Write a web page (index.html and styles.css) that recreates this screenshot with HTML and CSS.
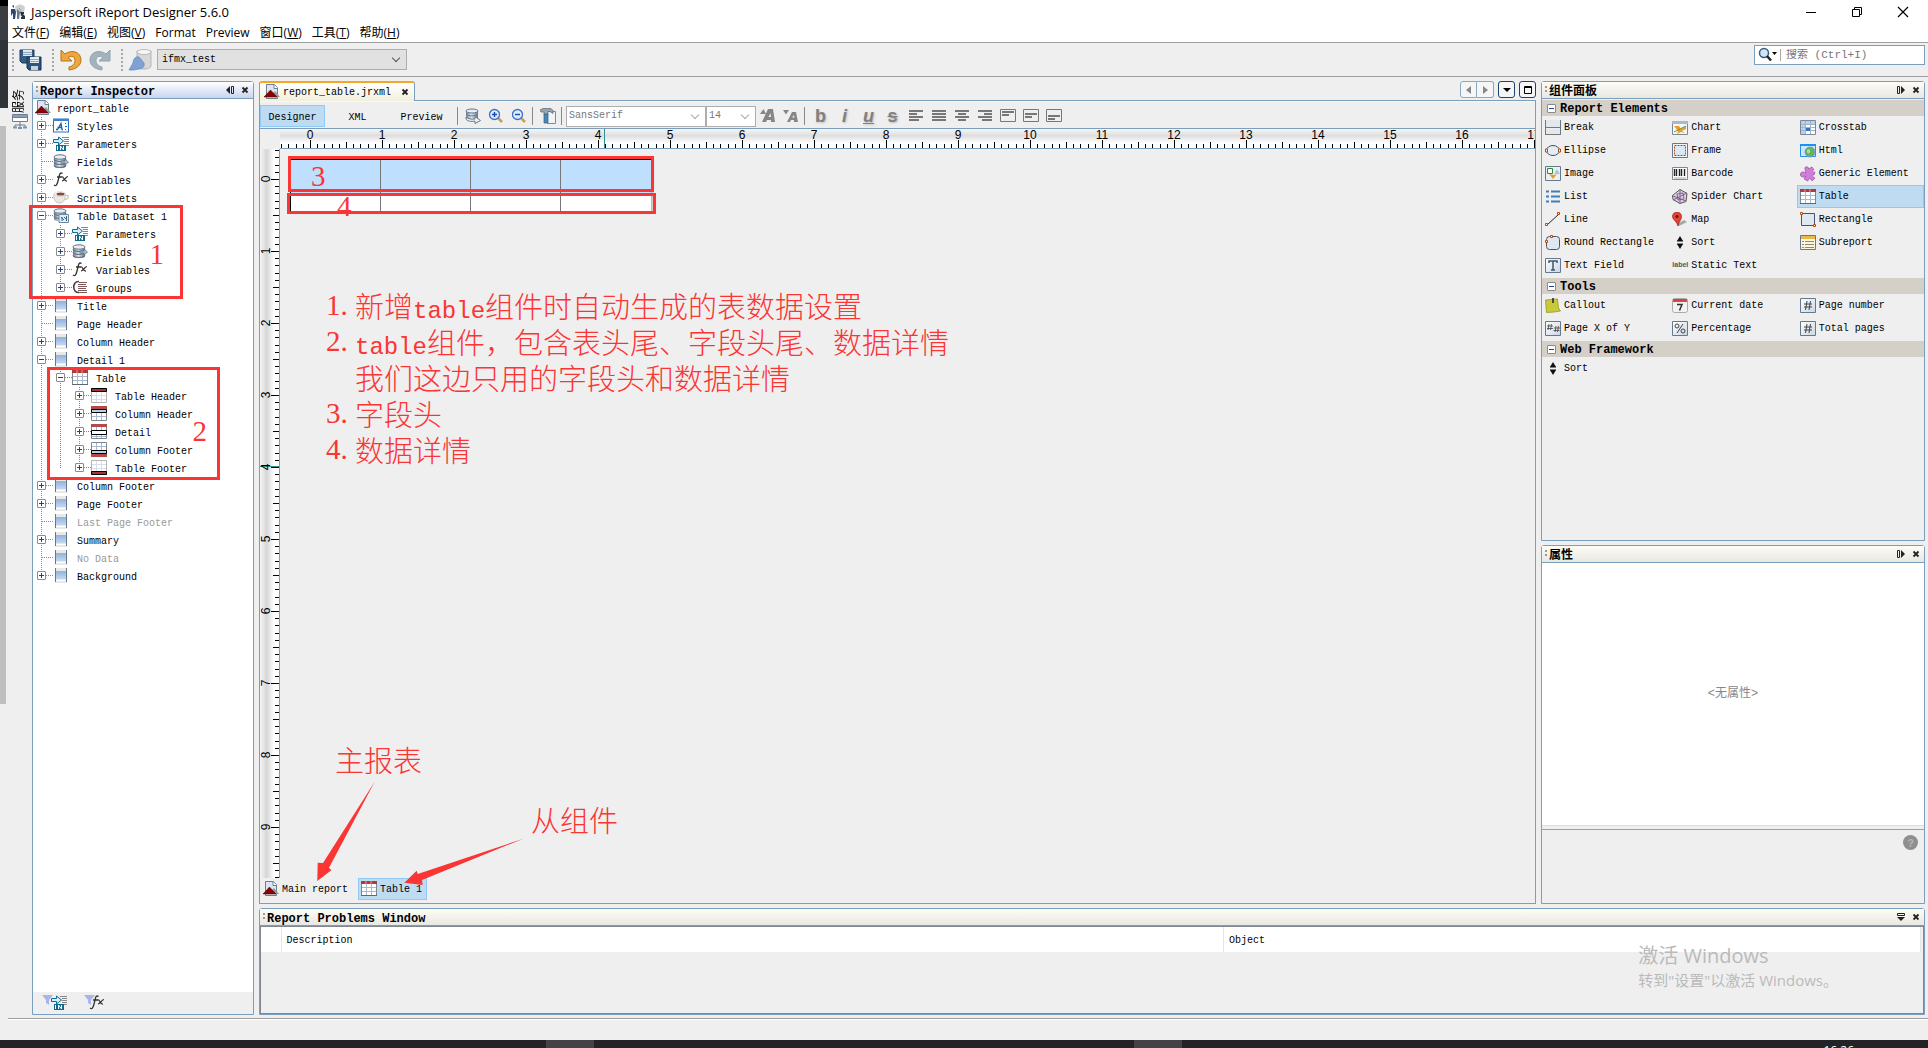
FILE: index.html
```html
<!DOCTYPE html>
<html lang="zh-CN">
<head>
    <meta charset="UTF-8">
    <meta name="viewport" content="width=device-width, initial-scale=1.0">
    <title>Jaspersoft iReport Designer 5.6.0</title>
    <link rel="stylesheet" href="styles.css">
</head>
<body>
    <!-- Icon sprite -->
    <svg class="sprite" width="0" height="0" aria-hidden="true">
        <defs>
            <linearGradient id="gBand" x1="0" y1="0" x2="0" y2="1"><stop offset="0" stop-color="#8fb2dc"/><stop offset="1" stop-color="#c3d8f0"/></linearGradient>
            <linearGradient id="gFrame" x1="0" y1="0" x2="1" y2="1"><stop offset="0" stop-color="#fff"/><stop offset="1" stop-color="#c9d6e6"/></linearGradient>
            <linearGradient id="gDb" x1="0" y1="0" x2="1" y2="0"><stop offset="0" stop-color="#6f8194"/><stop offset=".45" stop-color="#dfe7ee"/><stop offset="1" stop-color="#64778a"/></linearGradient>
        </defs>
        <symbol id="i-report" viewBox="0 0 16 16">
            <path d="M2.500 .5h8l3 3v11h-11z" fill="#dce6f2" stroke="#6d7f92"/><path d="M10 .5v4h4" fill="#fff" stroke="#6d7f92"/>
            <path d="M8 10l3-3 5 6H8z" fill="#999"/><path d="M0 13L6.500 6l6.500 7z" fill="#8e0000" stroke="#400" stroke-width=".5"/>
        </symbol>
        <symbol id="i-styles" viewBox="0 0 16 16">
            <rect x=".5" y="1" width="15" height="13" fill="#fff" stroke="#2b6fc0"/><path d="M0 1h16v2H0z" fill="#3b83d2"/>
            <path d="M3 11.500h1.500L8 5.500l1 6h1M4.500 9.500h4" fill="none" stroke="#1c62b4" stroke-width="1.300"/><path d="M12 5h1v1h-1zM12 8h2v1h-2zM12 11h1v1h-1z" fill="#1c62b4"/>
        </symbol>
        <symbol id="i-param" viewBox="0 0 16 16">
            <path d="M9 1.500h7M11 3.500h5M11 5.500h5M11 7.500h5M12 9.500h4" stroke="#888"/>
            <path d="M.5 3.500h5V1l5 4-5 4V6.500h-5z" fill="#d5effa" stroke="#116a94"/>
            <path d="M3 9h10v6H3z" fill="#0f6a8e"/><path d="M4.500 10v4M7.500 14v-4l3 4v-4" fill="none" stroke="#fff"/>
        </symbol>
        <symbol id="i-fields" viewBox="0 0 16 16">
            <path d="M1 3v9c0 3 12 3 12 0V3z" fill="url(#gDb)"/><ellipse cx="7" cy="3" rx="6" ry="2.200" fill="#e8eef4" stroke="#607387"/>
            <path d="M1 5.500c0 2.500 12 2.500 12 0M1 8.500c0 2.500 12 2.500 12 0M1 11.500c0 2.500 12 2.500 12 0" fill="none" stroke="#4f6275"/>
            <path d="M8 7h4V5l3.500 3.200L12 11V9H8z" fill="#a9bac9" stroke="#5c6f82" stroke-width=".7"/>
        </symbol>
        <symbol id="i-fx" viewBox="0 0 16 16">
            <path d="M1 13c2 1.500 3 0 4-4l1.500-6C7 1 8 .5 9.500 1.500M4 5h5" fill="none" stroke="#333" stroke-width="1.300"/>
            <path d="M9 5c2-.5 2 4.500 5 4M15 4.500c-2 0-4 4.500-6 4.500" fill="none" stroke="#333" stroke-width="1.200"/>
        </symbol>
        <symbol id="i-cup" viewBox="0 0 16 16">
            <path d="M1 4h11c1 6-2 9-5.500 9S0 10 1 4z" fill="#ece8e4" stroke="#b7b0aa" stroke-width=".7"/><path d="M12 5.500h3c.5 3-1 4-3.500 4" fill="none" stroke="#c9c2bc" stroke-width="1.200"/>
            <ellipse cx="7" cy="4" rx="5.500" ry="2.300" fill="#fff" stroke="#bbb" stroke-width=".5"/><ellipse cx="7.500" cy="4" rx="4" ry="1.500" fill="#8c4a35"/>
        </symbol>
        <symbol id="i-dataset" viewBox="0 0 16 16">
            <path d="M1 3v8c0 3 12 3 12 0V3z" fill="url(#gDb)"/><ellipse cx="7" cy="3" rx="6" ry="2.200" fill="#e8eef4" stroke="#607387"/>
            <path d="M1 5.500c0 2.500 12 2.500 12 0M1 8.500c0 2.500 12 2.500 12 0" fill="none" stroke="#4f6275"/>
            <path d="M6 6.500h9.500v8H6z" fill="#e4edf6" stroke="#6f88a2"/><path d="M8 9l3 3M9 13V9M14 12l-3-3M13.500 8v5" stroke="#34678f" fill="none"/>
        </symbol>
        <symbol id="i-groups" viewBox="0 0 16 16">
            <path d="M7 1.500C0 1 0 13 7 12.500" fill="none" stroke="#444" stroke-width="1.600"/><path d="M7 2.500h8M6 4.500h8M6 6.500h9M6 8.500h8M6 10.500h9M7 12.500h8" stroke="#7d5a5a"/>
        </symbol>
        <symbol id="i-band" viewBox="0 0 16 16">
            <path d="M2 0h12v15H2z" fill="#e8e8e8"/><path d="M2 3h12v8H2z" fill="url(#gBand)"/><path d="M2.500 0v14M13.500 0v14" stroke="#66788c"/><path d="M3 12h10v1H3z" fill="#fff"/>
        </symbol>
        <symbol id="i-table" viewBox="0 0 16 16">
            <path d="M.5 .5h15v14H.5z" fill="#fff" stroke="#7c8794"/><path d="M0 0h16v3H0z" fill="#b23a3a"/><path d="M5 0v3M10 0v3" stroke="#e29a9a"/>
            <path d="M5.500 3v11M10.500 3v11M1 6.500h14M1 10.500h14" stroke="#a9b9cc"/><path d="M0 14.500h16" stroke="#5d6874"/>
        </symbol>
        <symbol id="i-tableheader" viewBox="0 0 16 16">
            <path d="M.5 .5h15v14H.5z" fill="#fff" stroke="#b5b5b5"/><path d="M5.500 3v11M10.500 3v11M1 7.500h14M1 11.500h14" stroke="#d9dfe8"/><path d="M.5 .5h15v3H.5z" fill="#a83434" stroke="#000"/>
        </symbol>
        <symbol id="i-colheader" viewBox="0 0 16 16">
            <path d="M.5 .5h15v14H.5z" fill="#fff" stroke="#7c8794"/><path d="M0 0h16v3H0z" fill="#b24a4a"/><path d="M5.500 3v11M10.500 3v11M1 10.500h14" stroke="#a9b9cc"/><path d="M.5 3.500h15v3H.5z" fill="#b6d2f0" stroke="#000"/>
        </symbol>
        <symbol id="i-detail" viewBox="0 0 16 16">
            <path d="M.5 .5h15v14H.5z" fill="#fff" stroke="#7c8794"/><path d="M0 0h16v3H0z" fill="#b24a4a"/><path d="M5.500 3v11M10.500 3v11M1 12.500h14" stroke="#a9b9cc"/><path d="M.5 6.500h15v4H.5z" fill="#fff" stroke="#000"/>
        </symbol>
        <symbol id="i-colfooter" viewBox="0 0 16 16">
            <path d="M.5 .5h15v14H.5z" fill="#fff" stroke="#7c8794"/><path d="M0 12h16v3H0z" fill="#b24a4a"/><path d="M5.500 1v11M10.500 1v11M1 4.500h14" stroke="#a9b9cc"/><path d="M.5 8.500h15v3H.5z" fill="#b6d2f0" stroke="#000"/>
        </symbol>
        <symbol id="i-tablefooter" viewBox="0 0 16 16">
            <path d="M.5 .5h15v14H.5z" fill="#fff" stroke="#b5b5b5"/><path d="M5.500 1v11M10.500 1v11M1 4.500h14M1 8.500h14" stroke="#d9dfe8"/><path d="M.5 11.500h15v3H.5z" fill="#a83434" stroke="#000"/>
        </symbol>
        <symbol id="i-close" viewBox="0 0 8 8"><path d="M1.500 1.500l5 5M6.500 1.500l-5 5" stroke="#222" stroke-width="1.800"/></symbol>
        <symbol id="i-pin" viewBox="0 0 8 8"><path d="M.5 .5h2v7h-2z" fill="none" stroke="#222"/><path d="M4 0l4 4-4 4z" fill="#222"/></symbol>
        <symbol id="i-pinleft" viewBox="0 0 8 8"><path d="M5.500 .5h2v7h-2z" fill="none" stroke="#222"/><path d="M4 0L0 4l4 4z" fill="#222"/></symbol>
        <symbol id="i-pindown" viewBox="0 0 8 8"><path d="M.5 .5h7v2h-7z" fill="none" stroke="#222"/><path d="M0 4h8L4 8z" fill="#222"/></symbol>
        <symbol id="i-sort" viewBox="0 0 16 16"><path d="M8 1l3 5H5zM8 14l3-5H5z" fill="#111"/><path d="M5 6h6M5 9h6" stroke="#111"/></symbol>
        <symbol id="i-hash" viewBox="0 0 16 16"><path d="M.5 .5h15v14H.5z" fill="url(#gFrame)" stroke="#66788c"/><path d="M7 3L5.500 12M10.500 3L9 12M4 6h8M4 9h8" stroke="#444" fill="none"/></symbol>
    </svg>

    <div class="screen">
        <div class="desktop-edge"></div>
        <div class="window">
            <header class="titlebar">
                <svg class="app-icon" viewBox="0 0 16 16"><path d="M5 3c3-4 9-3 10 1l-1 4H6z" fill="#cfcfcf"/><path d="M2 2l2-1v3zM1 5h4l1 3-1 7H3V9L1 12z" fill="#30466e"/><path d="M7 5l3 3-1 7H7z" fill="#5a78a8"/><path d="M9 4c2 2 3 5 2 8" fill="none" stroke="#999"/><path d="M10 8h4v2h-1l2 2v3h-4v-2h1l-1-2z" fill="#333"/></svg>
                <span class="title">Jaspersoft iReport Designer 5.6.0</span>
                <div class="window-buttons">
                    <button type="button" aria-label="Minimize"><svg width="12" height="12"><path d="M1 6.500h10" stroke="#000"/></svg></button>
                    <button type="button" aria-label="Restore"><svg width="12" height="12"><path d="M1.500 3.500h7v7h-7zM3.500 3V1.500h7v7H9" fill="none" stroke="#000"/></svg></button>
                    <button type="button" aria-label="Close"><svg width="12" height="12"><path d="M1 1l10 10M11 1L1 11" stroke="#000" stroke-width="1.200"/></svg></button>
                </div>
            </header>

            <nav class="menubar">
                <a href="#">文件(<u>F</u>)</a>
                <a href="#">编辑(<u>E</u>)</a>
                <a href="#">视图(<u>V</u>)</a>
                <a href="#">Format</a>
                <a href="#">Preview</a>
                <a href="#">窗口(<u>W</u>)</a>
                <a href="#">工具(<u>T</u>)</a>
                <a href="#">帮助(<u>H</u>)</a>
            </nav>

            <div class="toolbar">
                <div class="tool-group">
                    <button type="button" aria-label="Save all"><svg width="24" height="24" viewBox="0 0 24 24"><path d="M1 2h14v13H3l-2-2z" fill="#335e87" stroke="#1c3a5a"/><path d="M4 2h9v6H4z" fill="#dfe9f2"/><path d="M4 4.500h9M4 6.500h9" stroke="#8ea6bd"/><path d="M8 9h14v13H10l-2-2z" fill="#2d557c" stroke="#16304c"/><path d="M11 9h9v6h-9z" fill="#e6eef5"/><path d="M11 11.500h9M11 13.500h9" stroke="#8ea6bd"/><path d="M12 18h7v4h-7z" fill="#c8d2dc"/></svg></button>
                </div>
                <div class="tool-group">
                    <button type="button" aria-label="Undo"><svg width="24" height="24" viewBox="0 0 24 24"><path d="M2 2v11h11l-4-3.500c4-2.500 7-1 7 3 0 3-2 5.500-6 6.500v3c8-1 12-5 12-10C22 4 13 1 6 6z" fill="#eda73e" stroke="#b87514"/></svg></button>
                    <button type="button" aria-label="Redo"><svg width="24" height="24" viewBox="0 0 24 24"><path d="M22 2v11H11l4-3.500c-4-2.500-7-1-7 3 0 3 2 5.500 6 6.500v3C6 21 2 17 2 12 2 4 11 1 18 6z" fill="#a3b3bd" stroke="#93a4af"/></svg></button>
                </div>
                <div class="tool-group">
                    <button type="button" aria-label="Data source"><svg width="24" height="24" viewBox="0 0 24 24"><path d="M9 3v15c0 4 14 4 14 0V3z" fill="#d8d8d8" stroke="#b5b5b5"/><ellipse cx="16" cy="4" rx="7" ry="2.500" fill="#f6f6f6" stroke="#bbb"/><path d="M1 22l4-7c0-4 3-7 6-6l5 6c1 4-2 6-5 6l-5 1z" fill="#7fa2d6" stroke="#5f86c0" stroke-width=".7"/></svg></button>
                    <div class="select datasource">
                        <select aria-label="Data source"><option>ifmx_test</option></select>
                    </div>
                </div>
                <label class="search">
                    <svg width="20" height="16" viewBox="0 0 20 16"><circle cx="6" cy="6" r="4.500" fill="#cfe6f8" stroke="#3b5a7c" stroke-width="1.500"/><path d="M9 9l4 4.500" stroke="#222" stroke-width="2.500"/><path d="M14 5h5l-2.500 3z" fill="#000"/></svg>
                    <input type="text" placeholder="搜索 (Ctrl+I)">
                </label>
            </div>

            <div class="workspace">
                <aside class="sidestrip">
                    <span>服务</span>
                    <svg width="16" height="16" viewBox="0 0 16 16"><path d="M.5 .5h15v3H.5zM.5 3.500h15v4H.5z" fill="#fff" stroke="#6a7f93"/><path d="M1 1h14v2H1z" fill="#8ba0b4"/><path d="M8 8v3M3 13v-2h10v2M8 11v2" stroke="#6a7f93" fill="none"/><path d="M1 12.500h4v2H1zM6 13h4v2H6zM11 12.500h4v2h-4z" fill="#7e93a6"/></svg>
                </aside>

                <section class="panel inspector">
                    <div class="panel-head active">
                        <h2>Report Inspector</h2>
                        <button type="button" aria-label="Pin"><svg><use href="#i-pinleft"/></svg></button>
                        <button type="button" aria-label="Close"><svg><use href="#i-close"/></svg></button>
                    </div>
                    <div class="tree">
                        <div class="node root"><svg><use href="#i-report"/></svg><span>report_table</span></div>
                        <ul>
                            <li><div class="node"><button type="button" class="toggle" aria-label="Expand"></button><svg><use href="#i-styles"/></svg><span>Styles</span></div></li>
                            <li><div class="node"><button type="button" class="toggle" aria-label="Expand"></button><svg><use href="#i-param"/></svg><span>Parameters</span></div></li>
                            <li><div class="node leaf"><svg><use href="#i-fields"/></svg><span>Fields</span></div></li>
                            <li><div class="node"><button type="button" class="toggle" aria-label="Expand"></button><svg><use href="#i-fx"/></svg><span>Variables</span></div></li>
                            <li><div class="node"><button type="button" class="toggle" aria-label="Expand"></button><svg><use href="#i-cup"/></svg><span>Scriptlets</span></div></li>
                            <li><div class="node"><button type="button" class="toggle open" aria-label="Collapse"></button><svg><use href="#i-dataset"/></svg><span>Table Dataset 1</span></div>
                                <ul>
                                    <li><div class="node"><button type="button" class="toggle" aria-label="Expand"></button><svg><use href="#i-param"/></svg><span>Parameters</span></div></li>
                                    <li><div class="node"><button type="button" class="toggle" aria-label="Expand"></button><svg><use href="#i-fields"/></svg><span>Fields</span></div></li>
                                    <li><div class="node"><button type="button" class="toggle" aria-label="Expand"></button><svg><use href="#i-fx"/></svg><span>Variables</span></div></li>
                                    <li><div class="node"><button type="button" class="toggle" aria-label="Expand"></button><svg><use href="#i-groups"/></svg><span>Groups</span></div></li>
                                </ul>
                            </li>
                            <li><div class="node"><button type="button" class="toggle" aria-label="Expand"></button><svg><use href="#i-band"/></svg><span>Title</span></div></li>
                            <li><div class="node leaf"><svg><use href="#i-band"/></svg><span>Page Header</span></div></li>
                            <li><div class="node"><button type="button" class="toggle" aria-label="Expand"></button><svg><use href="#i-band"/></svg><span>Column Header</span></div></li>
                            <li><div class="node"><button type="button" class="toggle open" aria-label="Collapse"></button><svg><use href="#i-band"/></svg><span>Detail 1</span></div>
                                <ul>
                                    <li><div class="node"><button type="button" class="toggle open" aria-label="Collapse"></button><svg><use href="#i-table"/></svg><span>Table</span></div>
                                        <ul>
                                            <li><div class="node"><button type="button" class="toggle" aria-label="Expand"></button><svg><use href="#i-tableheader"/></svg><span>Table Header</span></div></li>
                                            <li><div class="node"><button type="button" class="toggle" aria-label="Expand"></button><svg><use href="#i-colheader"/></svg><span>Column Header</span></div></li>
                                            <li><div class="node"><button type="button" class="toggle" aria-label="Expand"></button><svg><use href="#i-detail"/></svg><span>Detail</span></div></li>
                                            <li><div class="node"><button type="button" class="toggle" aria-label="Expand"></button><svg><use href="#i-colfooter"/></svg><span>Column Footer</span></div></li>
                                            <li><div class="node"><button type="button" class="toggle" aria-label="Expand"></button><svg><use href="#i-tablefooter"/></svg><span>Table Footer</span></div></li>
                                        </ul>
                                    </li>
                                </ul>
                            </li>
                            <li><div class="node"><button type="button" class="toggle" aria-label="Expand"></button><svg><use href="#i-band"/></svg><span>Column Footer</span></div></li>
                            <li><div class="node"><button type="button" class="toggle" aria-label="Expand"></button><svg><use href="#i-band"/></svg><span>Page Footer</span></div></li>
                            <li><div class="node leaf disabled"><svg><use href="#i-band"/></svg><span>Last Page Footer</span></div></li>
                            <li><div class="node"><button type="button" class="toggle" aria-label="Expand"></button><svg><use href="#i-band"/></svg><span>Summary</span></div></li>
                            <li><div class="node leaf disabled"><svg><use href="#i-band"/></svg><span>No Data</span></div></li>
                            <li><div class="node"><button type="button" class="toggle" aria-label="Expand"></button><svg><use href="#i-band"/></svg><span>Background</span></div></li>
                        </ul>
                        <div class="mark mark-dataset"><b>1</b></div>
                        <div class="mark mark-table"><b>2</b></div>
                    </div>
                    <div class="filters">
                        <button type="button" aria-label="Filter parameters"><svg width="26" height="16" viewBox="0 0 26 16"><path d="M0 0h11L7 5v5l-3-2V5z" fill="#a9b5ea"/><use href="#i-param" x="9" width="16" height="16"/></svg></button>
                        <button type="button" aria-label="Filter variables"><svg width="22" height="16" viewBox="0 0 22 16"><path d="M0 0h11L7 5v5l-3-2V5z" fill="#a9b5ea"/><use href="#i-fx" x="5" width="16" height="16"/></svg></button>
                    </div>
                </section>

                <main class="center">
                    <div class="tabbar">
                        <div class="file-tab">
                            <svg class="icon"><use href="#i-report"/></svg>
                            <span>report_table.jrxml</span>
                            <button type="button" aria-label="Close tab"><svg width="8" height="8"><use href="#i-close"/></svg></button>
                        </div>
                        <div class="tab-nav">
                            <button type="button" class="soft first" aria-label="Previous"><svg width="8" height="8"><path d="M6 0L1 4l5 4z" fill="#888"/></svg></button>
                            <button type="button" class="soft last" aria-label="Next"><svg width="8" height="8"><path d="M2 0l5 4-5 4z" fill="#888"/></svg></button>
                            <button type="button" aria-label="List tabs"><svg width="8" height="8"><path d="M0 2h8L4 6z" fill="#000"/></svg></button>
                            <button type="button" aria-label="Maximize"><svg width="8" height="8"><path d="M.5 .5h7v7h-7zM.5 1.500h7" fill="none" stroke="#000"/></svg></button>
                        </div>
                    </div>
                    <div class="editor">
                        <div class="editor-bar">
                            <button type="button" class="view-button selected">Designer</button>
                            <button type="button" class="view-button">XML</button>
                            <button type="button" class="view-button wide">Preview</button>
                            <i class="sep"></i>
                            <button type="button" aria-label="Query"><svg width="16" height="16" viewBox="0 0 16 16"><path d="M1 3v8c0 3 12 3 12 0V3z" fill="url(#gDb)"/><ellipse cx="7" cy="3" rx="6" ry="2" fill="#e8eef4" stroke="#607387"/><path d="M1 6c2 2.500 10 2.500 12 0" fill="none" stroke="#66788c"/><path d="M1 9c2 2 6 2.500 9 2V8.500l5.500 4-5.500 3V13c-4 1-8 0-9-2z" fill="#eef2f5" stroke="#66788c"/></svg></button>
                            <button type="button" aria-label="Zoom in"><svg width="16" height="16" viewBox="0 0 16 16"><path d="M10 10l4 4" stroke="#c9a050" stroke-width="2.500"/><circle cx="6.500" cy="6.500" r="5" fill="#dcecff" stroke="#4070c4" stroke-width="1.300"/><path d="M4 6.500h5M6.500 4v5" stroke="#1c4aa8" stroke-width="1.400"/></svg></button>
                            <button type="button" aria-label="Zoom out"><svg width="16" height="16" viewBox="0 0 16 16"><path d="M10 10l4 4" stroke="#c9a050" stroke-width="2.500"/><circle cx="6.500" cy="6.500" r="5" fill="#dcecff" stroke="#4070c4" stroke-width="1.300"/><path d="M4 6.500h5" stroke="#1c4aa8" stroke-width="1.400"/></svg></button>
                            <i class="sep"></i>
                            <button type="button" aria-label="Build"><svg width="16" height="16" viewBox="0 0 16 16"><path d="M7.500 3.500h8v12h-8z" fill="#f0f4f8" stroke="#7b8b9a"/><path d="M0 2l3-1.500h8l2 2v3l-3-2H8v3H4V4H1z" fill="#9aa4ad" stroke="#5c666f" stroke-width=".7"/><path d="M4 6h4v9H4z" fill="#4c86b4" stroke="#2d5e88" stroke-width=".7"/></svg></button>
                            <i class="sep"></i>
                            <div class="font-selects">
                                <div class="select light font-name"><select aria-label="Font"><option>SansSerif</option></select></div>
                                <div class="select light font-size"><select aria-label="Font size"><option>14</option></select></div>
                            </div>
                            <button type="button" aria-label="Bigger"><svg width="16" height="16" viewBox="0 0 16 16"><path d="M2 14L8 1h5l2 13h-4v-2H7l-1 2zM8.500 9H11L10.500 5z" fill="#858585" fill-rule="evenodd"/><path d="M0 6l3.500-5L6 6z" fill="#858585"/></svg></button>
                            <button type="button" aria-label="Smaller"><svg width="16" height="16" viewBox="0 0 16 16"><path d="M4 14l5-10h4l2 10h-4v-2H8l-1 2zM9 9.500h2.500L11 7z" fill="#858585" fill-rule="evenodd"/><path d="M0 2h6L3 6.500z" fill="#858585"/></svg></button>
                            <i class="sep"></i>
                            <button type="button" class="glyph">b</button>
                            <button type="button" class="glyph"><em>i</em></button>
                            <button type="button" class="glyph"><em><u>u</u></em></button>
                            <button type="button" class="glyph"><s>s</s></button>
                            <button type="button" aria-label="Align left"><svg width="16" height="16"><path d="M1 3h14M1 6h8M1 9h14M1 12h10" stroke="#777" stroke-width="2"/></svg></button>
                            <button type="button" aria-label="Justify"><svg width="16" height="16"><path d="M1 3h14M1 6h14M1 9h14M1 12h14" stroke="#777" stroke-width="2"/></svg></button>
                            <button type="button" aria-label="Align center"><svg width="16" height="16"><path d="M1 3h14M4 6h8M1 9h14M4 12h8" stroke="#777" stroke-width="2"/></svg></button>
                            <button type="button" aria-label="Align right"><svg width="16" height="16"><path d="M1 3h14M7 6h8M1 9h14M5 12h10" stroke="#777" stroke-width="2"/></svg></button>
                            <button type="button" aria-label="Align top"><svg width="16" height="16"><path d="M.5 1.500h15v12H.5z" fill="none" stroke="#777"/><path d="M2 4h12M2 7h7" stroke="#777" stroke-width="2"/></svg></button>
                            <button type="button" aria-label="Align middle"><svg width="16" height="16"><path d="M.5 1.500h15v12H.5z" fill="none" stroke="#777"/><path d="M2 6h12M2 9h7" stroke="#777" stroke-width="2"/></svg></button>
                            <button type="button" aria-label="Align bottom"><svg width="16" height="16"><path d="M.5 1.500h15v12H.5z" fill="none" stroke="#777"/><path d="M2 8h12M2 11h7" stroke="#777" stroke-width="2"/></svg></button>
                        </div>

                        <div class="editor-view">
                            <div class="ruler-corner"></div>
                            <div class="ruler ruler-x">
                                <svg width="100%" height="19">
                                    <defs>
                                        <pattern id="ticksX" x="30" y="0" width="72" height="19" patternUnits="userSpaceOnUse">
                                            <path d="M.5 11v8M36.500 13v6M7.500 15v4M14.500 15v4M22.500 15v4M29.500 15v4M43.500 15v4M50.500 15v4M58.500 15v4M65.500 15v4" stroke="#000"/>
                                        </pattern>
                                    </defs>
                                    <rect width="100%" height="19" fill="url(#ticksX)"/>
                                    <path d="M324.500 0v19" stroke="#2f8f8f"/>
                                    <g text-anchor="middle">
                                        <text x="30" y="10">0</text><text x="102" y="10">1</text><text x="174" y="10">2</text><text x="246" y="10">3</text><text x="318" y="10">4</text><text x="390" y="10">5</text><text x="462" y="10">6</text><text x="534" y="10">7</text><text x="606" y="10">8</text><text x="678" y="10">9</text><text x="750" y="10">10</text><text x="822" y="10">11</text><text x="894" y="10">12</text><text x="966" y="10">13</text><text x="1038" y="10">14</text><text x="1110" y="10">15</text><text x="1182" y="10">16</text><text x="1254" y="10">17</text>
                                    </g>
                                </svg>
                            </div>
                            <div class="ruler ruler-y">
                                <svg width="19" height="100%">
                                    <defs>
                                        <pattern id="ticksY" x="0" y="30" width="19" height="72" patternUnits="userSpaceOnUse">
                                            <path d="M11 .5h8M13 36.500h6M15 7.500h4M15 14.500h4M15 22.500h4M15 29.500h4M15 43.500h4M15 50.500h4M15 58.500h4M15 65.500h4" stroke="#000"/>
                                        </pattern>
                                    </defs>
                                    <rect width="19" height="100%" fill="url(#ticksY)"/>
                                    <path d="M0 317.500h19" stroke="#2f8f8f"/>
                                    <g text-anchor="middle">
                                        <text transform="translate(10 30) rotate(-90)">0</text><text transform="translate(10 102) rotate(-90)">1</text><text transform="translate(10 174) rotate(-90)">2</text><text transform="translate(10 246) rotate(-90)">3</text><text transform="translate(10 318) rotate(-90)">4</text><text transform="translate(10 390) rotate(-90)">5</text><text transform="translate(10 462) rotate(-90)">6</text><text transform="translate(10 534) rotate(-90)">7</text><text transform="translate(10 606) rotate(-90)">8</text><text transform="translate(10 678) rotate(-90)">9</text>
                                    </g>
                                </svg>
                            </div>
                            <div class="canvas">
                                <table class="report-table">
                                    <tr class="column-header"><td></td><td></td><td></td><td></td></tr>
                                    <tr class="detail"><td></td><td></td><td></td><td></td></tr>
                                </table>
                                <div class="mark mark-header"><b>3</b></div>
                                <div class="mark mark-detail"><b>4</b></div>
                                <div class="notes">
                                    <p><b>1.</b><span>新增<code>table</code>组件时自动生成的表数据设置</span></p>
                                    <p><b>2.</b><span><code>table</code>组件，包含表头尾、字段头尾、数据详情</span></p>
                                    <p><b></b><span>我们这边只用的字段头和数据详情</span></p>
                                    <p><b>3.</b><span>字段头</span></p>
                                    <p><b>4.</b><span>数据详情</span></p>
                                </div>
                            </div>
                            <div class="sheet-tabs">
                                <button type="button"><svg class="icon"><use href="#i-report"/></svg><span>Main report</span></button>
                                <button type="button" class="selected"><svg class="icon"><use href="#i-table"/></svg><span>Table 1</span></button>
                            </div>
                            <div class="callout callout-main">主报表</div>
                            <div class="callout callout-sub">从组件</div>
                            <svg class="arrows" width="220" height="110" viewBox="0 0 220 110"><path d="M61.700 .7L10 82l-5.300-.3L4.300 100l14-10.700-2.300-2.600zM210.300 57.700L104.700 93l-1-3.300L91.300 101.700l18.400 2.300-.7-5z" fill="#fb3434"/></svg>
                        </div>
                    </div>
                </main>

                <div class="right">
                    <section class="panel palette">
                        <div class="panel-head">
                            <h2>组件面板</h2>
                            <button type="button" aria-label="Pin"><svg><use href="#i-pin"/></svg></button>
                            <button type="button" aria-label="Close"><svg><use href="#i-close"/></svg></button>
                        </div>
                        <h3><button type="button" class="toggle open" aria-label="Collapse"></button>Report Elements</h3>
                        <div class="items">
                            <button type="button"><svg class="icon" viewBox="0 0 16 16"><path d="M.5 0v15M15.500 0v15" stroke="#66788c"/><path d="M1 0h14v7H1zM1 9h14v5H1z" fill="#e3e7ee"/><path d="M1 7.500h14" stroke="#4f7fc0"/><path d="M0 14.500h16" stroke="#777"/></svg>Break</button>
                            <button type="button"><svg class="icon" viewBox="0 0 16 16"><path d="M.5 1.500h15v13H.5z" fill="#f5f8fb" stroke="#7c8794"/><path d="M0 1h16v3H0z" fill="#a9b9cc"/><path d="M2 6h5l2 3 5-3v3l-4 2 3 2-4-1-4 2 1-3z" fill="#f09a2a"/><path d="M2 12l12-6" stroke="#4aa04a"/></svg>Chart</button>
                            <button type="button"><svg class="icon" viewBox="0 0 16 16"><path d="M.5 .5h15v14H.5z" fill="#fff" stroke="#7c8794"/><path d="M1 1h14v3H1zM1 4h4v10H1z" fill="#b9d0ea"/><path d="M5.500 1v13M10.500 1v13M1 4.500h14M1 7.500h14M1 10.500h14" stroke="#9db4cf"/><path d="M6 8h4v3H6z" fill="#3b6fc4"/></svg>Crosstab</button>
                            <button type="button"><svg class="icon" viewBox="0 0 16 16"><ellipse cx="8" cy="7.500" rx="6.500" ry="5" fill="#e3ebf5" stroke="#44546a"/><path d="M.5 6h2v3h-2zM13.500 6h2v3h-2z" fill="#fff" stroke="#b04a12"/></svg>Ellipse</button>
                            <button type="button"><svg class="icon" viewBox="0 0 16 16"><path d="M.5 .5h15v14H.5z" fill="#f4f6f8" stroke="#66788c"/><path d="M2.500 2.500h11v10h-11z" fill="#dbe7f5" stroke="#b04a12" stroke-dasharray="2 1"/></svg>Frame</button>
                            <button type="button"><svg class="icon" viewBox="0 0 16 16"><path d="M.5 1.500h15v12H.5z" fill="#cfe8ff" stroke="#1e90f0"/><path d="M0 1h16v2H0z" fill="#1e90f0"/><circle cx="10" cy="9" r="5" fill="#64b45c" stroke="#6f9ccf"/><path d="M7 7c2-2 4 0 3 2s-2 2-3 0z" fill="#a8e0a0"/></svg>Html</button>
                            <button type="button"><svg class="icon" viewBox="0 0 16 16"><path d="M.5 .5h15v14H.5z" fill="#eaf0f6" stroke="#66788c"/><path d="M2.500 2.500h5v5h-5z" fill="#fff" stroke="#2f8a36"/><path d="M12 3l3 5H9z" fill="#a8c6e8"/><path d="M4 8l4 5 4-5-3 1z" fill="#e2a020"/></svg>Image</button>
                            <button type="button"><svg class="icon" viewBox="0 0 16 16"><path d="M.5 1.500h15v12H.5z" fill="#fff" stroke="#7c8794"/><path d="M2.500 3v7M4.500 3v7M7.500 3v7M9.500 3v7M12.500 3v7" stroke="#222" stroke-width="1.400"/><path d="M2 12h12" stroke="#aaa"/></svg>Barcode</button>
                            <button type="button"><svg class="icon" viewBox="0 0 16 16"><path d="M5 3c-1-3 4-3 3.500 0L12 1l2 3c-3 0-2 3 1 2l-1 3c-3-1-2 2 1 3l-3 3c-1-3-4-3-4 0l-4-2 2-3C3 12 0 11 .5 8S4 6 6 7z" fill="#d07fd8" stroke="#9a48a6" stroke-width=".7"/></svg>Generic Element</button>
                            <button type="button"><svg class="icon" viewBox="0 0 16 16"><path d="M1 2.500h3M1 7.500h3M1 12.500h3M6 2.500h9M6 7.500h9M6 12.500h9" stroke="#3f7fb8" stroke-width="2"/></svg>List</button>
                            <button type="button"><svg class="icon" viewBox="0 0 16 16"><path d="M8 .5l7 4-1 8-6 2-7-4-.5-4z" fill="#ddd0e0" stroke="#555"/><path d="M8 1v13M1 7l13 5M15 4L1 11M5 5l6-1 1 6-6 1z" stroke="#81608a" fill="none"/></svg>Spider Chart</button>
                            <button type="button" class="selected"><svg class="icon"><use href="#i-table"/></svg>Table</button>
                            <button type="button"><svg class="icon" viewBox="0 0 16 16"><path d="M2 13L14 2" stroke="#222"/><path d="M.5 11.500h2v2h-2zM12.500 .5h2v2h-2z" fill="#fff" stroke="#b04a12"/></svg>Line</button>
                            <button type="button"><svg class="icon" viewBox="0 0 16 16"><path d="M5 12l7-4 3 2-8 4z" fill="#a9a9a9"/><path d="M6 14C5 9 .5 8 .5 4.500a4.500 4.500 0 019 0C9.500 8 7 9 6 14z" fill="#df4436" stroke="#9a2118" stroke-width=".7"/><circle cx="5" cy="4.500" r="1.500" fill="#6a110b"/></svg>Map</button>
                            <button type="button"><svg class="icon" viewBox="0 0 16 16"><path d="M1.500 1.500h13v12h-13z" fill="#dfe7f0" stroke="#44546a"/><path d="M.5 .5h2v2h-2zM13.500 12.500h2v2h-2z" fill="#fff" stroke="#b04a12"/></svg>Rectangle</button>
                            <button type="button"><svg class="icon" viewBox="0 0 16 16"><rect x="1.500" y="1.500" width="13" height="13" rx="3" fill="#dfe7f0" stroke="#44546a"/><path d="M.5 5.500h2v2h-2zM5.500 .5h2v2h-2z" fill="#fff" stroke="#b04a12"/></svg>Round Rectangle</button>
                            <button type="button"><svg class="icon"><use href="#i-sort"/></svg>Sort</button>
                            <button type="button"><svg class="icon" viewBox="0 0 16 16"><path d="M.5 .5h15v14H.5z" fill="#fff6d8" stroke="#66788c"/><path d="M1 1h14v3H1z" fill="#e8b84c"/><path d="M2 6.500h2M5 6.500h9M2 9.500h2M5 9.500h9M2 12.500h2M5 12.500h9" stroke="#888"/></svg>Subreport</button>
                            <button type="button"><svg class="icon" viewBox="0 0 16 16"><path d="M.5 .5h15v14H.5z" fill="url(#gFrame)" stroke="#66788c"/><path d="M4 5V3h8v2M8 3v9M6 12h4" fill="none" stroke="#44546a" stroke-width="1.500"/></svg>Text Field</button>
                            <button type="button"><span class="icon label-icon">label</span>Static Text</button>
                        </div>
                        <h3><button type="button" class="toggle open" aria-label="Collapse"></button>Tools</h3>
                        <div class="items">
                            <button type="button"><svg class="icon" viewBox="0 0 16 16"><path d="M.5 2l12-1 1 9 2 3-6 1-8 .5z" fill="#c9c93c" stroke="#8e8e1c" stroke-width=".7"/><path d="M8 0v5" stroke="#222" stroke-width="1.500"/></svg>Callout</button>
                            <button type="button"><svg class="icon" viewBox="0 0 16 16"><rect x=".5" y=".5" width="15" height="14" rx="2" fill="#f2f2f2" stroke="#aaa"/><path d="M1 1h14v3H1z" fill="#d9463c"/><path d="M5 6.500h5l-2.500 6" fill="none" stroke="#333" stroke-width="1.500"/></svg>Current date</button>
                            <button type="button"><svg class="icon"><use href="#i-hash"/></svg>Page number</button>
                            <button type="button"><svg class="icon" viewBox="0 0 16 16"><path d="M.5 .5h15v14H.5z" fill="url(#gFrame)" stroke="#66788c"/><path d="M4 3L3 9M6.500 3l-1 6M2 5h6M2 7.500h6M11 5l-1 6M13.500 5l-1 6M9 7h6M8.500 9.500h6" stroke="#444" fill="none" stroke-width=".8"/></svg>Page X of Y</button>
                            <button type="button"><svg class="icon" viewBox="0 0 16 16"><path d="M.5 .5h15v14H.5z" fill="url(#gFrame)" stroke="#66788c"/><circle cx="5" cy="5" r="2" fill="none" stroke="#444"/><circle cx="11" cy="10" r="2" fill="none" stroke="#444"/><path d="M11 3L5 12" stroke="#444"/></svg>Percentage</button>
                            <button type="button"><svg class="icon"><use href="#i-hash"/></svg>Total pages</button>
                        </div>
                        <h3><button type="button" class="toggle open" aria-label="Collapse"></button>Web Framework</h3>
                        <div class="items">
                            <button type="button"><svg class="icon"><use href="#i-sort"/></svg>Sort</button>
                        </div>
                    </section>

                    <section class="panel properties">
                        <div class="panel-head">
                            <h2>属性</h2>
                            <button type="button" aria-label="Pin"><svg><use href="#i-pin"/></svg></button>
                            <button type="button" aria-label="Close"><svg><use href="#i-close"/></svg></button>
                        </div>
                        <div class="no-properties">&lt;无属性&gt;</div>
                        <div class="description"><button type="button" class="help">?</button></div>
                    </section>
                </div>

                <section class="panel problems">
                    <div class="panel-head">
                        <h2>Report Problems Window</h2>
                        <button type="button" aria-label="Pin"><svg><use href="#i-pindown"/></svg></button>
                        <button type="button" aria-label="Close"><svg><use href="#i-close"/></svg></button>
                    </div>
                    <div class="problem-list">
                        <table>
                            <thead><tr><th class="mark-col"></th><th>Description</th><th class="object-col">Object</th></tr></thead>
                        </table>
                    </div>
                </section>
            </div>

            <footer class="statusbar"></footer>
            <div class="watermark">
                <p class="big">激活 Windows</p>
                <p>转到"设置"以激活 Windows。</p>
            </div>
        </div>
        <div class="taskbar"><span></span><span></span><time>16:26</time></div>
    </div>
</body>
</html>
```

FILE: styles.css
```css
* {
    margin: 0;
    padding: 0;
    box-sizing: border-box;
}

body {
    font-family: 'Liberation Mono', 'Noto Sans CJK SC', monospace;
    font-size: 10px;
    line-height: 18px;
    color: #000;
    background: #efefef;
    overflow: hidden;
}

button {
    font: inherit;
    color: inherit;
    background: none;
    border: none;
    display: flex;
    align-items: center;
    justify-content: center;
}

ul {
    list-style: none;
}

a {
    color: inherit;
    text-decoration: none;
}

.sprite {
    position: absolute;
}

.icon {
    width: 16px;
    height: 16px;
    flex: none;
}

.screen {
    display: grid;
    grid-template: 1fr 8px / 8px 1fr;
    height: 100vh;
}

.desktop-edge {
    background:
        linear-gradient(#000 6px, #3a3e42 6px, #3a3e42 40px, #2f3337 40px, #2f3337 108px, transparent 108px),
        linear-gradient(#efefef 126px, #bfbfbf 126px, #bfbfbf 704px, #efefef 704px) 0 0 / 6px 100% no-repeat;
}

.window {
    display: flex;
    flex-direction: column;
    position: relative;
    min-width: 0;
    min-height: 0;
}

/* Title and menu */
.titlebar {
    height: 23px;
    padding: 0 2px;
    display: flex;
    align-items: center;
    gap: 5px;
    background: #fff;
    font-family: 'Open Sans', sans-serif;
    font-size: 13px;
}

.app-icon {
    width: 16px;
    height: 16px;
}

.window-buttons {
    display: flex;
    margin-left: auto;
}

.window-buttons button {
    width: 46px;
    height: 20px;
}

.menubar {
    height: 20px;
    padding-left: 4px;
    display: flex;
    gap: 10px;
    background: #fff;
    border-bottom: 1px solid #a0a0a0;
    font-family: 'Open Sans', 'Noto Sans CJK SC', sans-serif;
    font-size: 12px;
    line-height: 20px;
}

/* Main toolbar */
.toolbar {
    height: 34px;
    padding: 0 3px 0 4px;
    display: flex;
    align-items: center;
    gap: 9px;
    border-bottom: 1px solid #a0a0a0;
}

.tool-group {
    display: flex;
    align-items: center;
    gap: 5px;
    height: 22px;
    padding-left: 5px;
    border-left: 2px dotted #a8a8a8;
}

.select {
    position: relative;
}

.select select {
    display: block;
    width: 100%;
    height: 21px;
    padding: 0 4px;
    appearance: none;
    border: 1px solid #adadad;
    border-radius: 0;
    background: #e1e1e1;
    font: inherit;
    color: #000;
}

.select::after {
    content: '';
    position: absolute;
    right: 8px;
    top: 6px;
    width: 5px;
    height: 5px;
    border: solid #555;
    border-width: 0 1px 1px 0;
    transform: rotate(45deg);
    pointer-events: none;
}

.select.light select {
    background: #fff;
    color: #777;
    padding: 0 2px;
}

.select.light::after {
    border-color: #aaa;
}

.datasource {
    width: 250px;
}

.search {
    display: flex;
    align-items: center;
    width: 171px;
    height: 20px;
    margin: 0 0 9px auto;
    padding-left: 3px;
    background: #fff;
    border: 1px solid #7a9ebd;
}

.search input {
    flex: 1;
    min-width: 0;
    height: 12px;
    margin-left: 2px;
    padding-left: 5px;
    border: none;
    border-left: 1px solid #aaa;
    font: inherit;
    font-size: 11px;
}

.search input::placeholder {
    color: #777;
    opacity: 1;
}

/* Docked panels */
.workspace {
    flex: 1;
    min-height: 0;
    display: grid;
    grid-template-columns: 19px 222px minmax(0, 1fr) 384px;
    grid-template-rows: minmax(0, 1fr) 107px;
    gap: 4px 5px;
    padding: 4px 3px 3px 0;
}

.sidestrip {
    grid-row: 1 / 3;
    padding: 8px 0 0 4px;
    display: flex;
    flex-direction: column;
    align-items: center;
    gap: 1px;
    font-size: 12px;
}

.sidestrip span {
    writing-mode: vertical-rl;
    text-orientation: sideways;
    transform: rotate(180deg);
    line-height: 16px;
}

.panel {
    display: flex;
    flex-direction: column;
    min-height: 0;
    border: 1px solid #7a9ebd;
    border-radius: 3px 3px 0 0;
}

.panel-head {
    flex: none;
    display: flex;
    align-items: center;
    gap: 7px;
    height: 17px;
    padding: 0 4px 0 7px;
    overflow: hidden;
    background: linear-gradient(#fdfdf6, #e8e7e1);
    border-bottom: 1px solid #7a9ebd;
    position: relative;
}

.panel-head::before {
    content: '';
    position: absolute;
    left: 3px;
    top: 4px;
    height: 6px;
    border-left: 2px dotted #999;
}

.panel-head.active {
    background: linear-gradient(#fff, #c8d3ee);
}

.panel-head h2 {
    flex: 1;
    height: 16px;
    line-height: 21px;
    font-size: 12px;
}

.panel-head button,
.panel-head svg {
    width: 8px;
    height: 8px;
}

.inspector {
    grid-row: 1 / 3;
}

/* Report tree */
.tree {
    flex: 1;
    position: relative;
    background: #fff;
}

.node {
    display: flex;
    height: 18px;
    position: relative;
}

.node svg {
    width: 16px;
    height: 16px;
    margin: 1px 8px 0 6px;
}

.node span {
    line-height: 22px;
    white-space: nowrap;
}

.node.root svg {
    margin: 1px 6px 0 2px;
}

.node.leaf svg {
    margin-left: 16px;
}

.node.disabled {
    color: #999;
}

.tree ul {
    position: relative;
    padding-left: 4px;
}

.tree ul ul {
    padding-left: 19px;
}

.tree > ul::before {
    content: '';
    position: absolute;
    left: 8px;
    top: 0;
    bottom: 9px;
    border-left: 1px dotted #888;
}

.tree ul ul::before {
    content: '';
    position: absolute;
    left: 23px;
    top: 0;
    bottom: 9px;
    border-left: 1px dotted #888;
}

.tree li .node::before {
    content: '';
    position: absolute;
    left: 5px;
    top: 8px;
    width: 11px;
    border-top: 1px dotted #888;
}

.toggle {
    position: relative;
    flex: none;
    width: 9px;
    height: 9px;
    margin: 4px 1px 0 0;
    border: 1px solid #8a8a8a;
    border-radius: 1px;
    background: linear-gradient(#1f3f9a, #1f3f9a) center / 5px 1px no-repeat, linear-gradient(#1f3f9a, #1f3f9a) center / 1px 5px no-repeat, #fff;
}

.toggle.open {
    background: linear-gradient(#1f3f9a, #1f3f9a) center / 5px 1px no-repeat, #fff;
}

.filters {
    display: flex;
    gap: 16px;
    height: 22px;
    padding-left: 9px;
}

/* Red review marks */
.mark {
    position: absolute;
    border: 3px solid #fb3434;
    color: #fb3434;
}

.mark b,
.notes b {
    font: 29px 'Liberation Serif', serif;
}

.mark b {
    position: absolute;
    line-height: 28px;
}

.mark-dataset {
    left: -4px;
    top: 106px;
    width: 154px;
    height: 94px;
}

.mark-dataset b {
    right: 16px;
    bottom: 28px;
}

.mark-table {
    left: 14px;
    top: 268px;
    width: 173px;
    height: 113px;
}

.mark-table b {
    right: 10px;
    bottom: 32px;
}

/* Editor */
.center {
    display: flex;
    flex-direction: column;
    min-height: 0;
    min-width: 0;
}

.tabbar {
    flex: none;
    display: flex;
    justify-content: space-between;
    height: 20px;
    box-shadow: inset 0 -1px #7a9ebd;
}

.file-tab {
    display: flex;
    align-items: center;
    gap: 3px;
    width: 156px;
    height: 20px;
    padding: 0 5px 0 4px;
    background: linear-gradient(#fff, #f3efdc);
    border: 1px solid #7a9ebd;
    border-top: 2px solid #f5a623;
    border-bottom: none;
    border-radius: 3px 3px 0 0;
}

.file-tab span,
.sheet-tabs span {
    padding-top: 2px;
}

.file-tab button {
    margin-left: auto;
}

.tab-nav {
    display: flex;
    gap: 4px;
}

.tab-nav button {
    width: 17px;
    height: 17px;
    border: 1px solid #1d4370;
    border-radius: 3px;
    background: #f6f6f6;
}

.tab-nav .soft {
    border-color: #8aa9c4;
}

.tab-nav .first {
    border-radius: 3px 0 0 3px;
    margin-right: -4px;
}

.tab-nav .last {
    border-left: none;
    border-radius: 0 3px 3px 0;
}

.editor {
    flex: 1;
    min-height: 0;
    display: flex;
    flex-direction: column;
    border: 1px solid #7a9ebd;
    border-top: none;
}

.editor-bar {
    flex: none;
    display: flex;
    align-items: center;
    gap: 7px;
    height: 28px;
    padding-top: 2px;
    border-top: 1px solid #fbf8ec;
    border-bottom: 1px solid #7a9ebd;
}

.view-button {
    height: 22px;
    width: 65px;
    padding-top: 3px;
    border: 1px solid transparent;
    margin-right: -7px;
}

.view-button.wide {
    width: 63px;
    margin-right: -1px;
}

.selected {
    background: #bfdbf2;
    border: 1px solid #90c8f6;
}

.sep {
    width: 1px;
    height: 18px;
    background: #888;
    margin-left: -2px;
}

.font-selects {
    display: flex;
    margin-left: -3px;
    margin-right: -3px;
}

.font-name {
    width: 140px;
}

.font-size {
    width: 50px;
}

.glyph {
    width: 17px;
    font: bold 18px 'Liberation Sans', sans-serif;
    color: #808080;
    text-shadow: 1px 1px 2px #bbb;
}

.editor-view {
    flex: 1;
    min-height: 0;
    position: relative;
    display: grid;
    grid-template: 20px minmax(0, 1fr) 25px / 20px minmax(0, 1fr);
}

.ruler {
    overflow: hidden;
    font: 12px 'Liberation Sans', sans-serif;
}

.ruler svg {
    display: block;
}

.ruler-x {
    background: linear-gradient(#f6f6f6, #dedede 35%, #fff 75%);
    border-bottom: 1px solid #7a9ebd;
}

.ruler-y {
    background: linear-gradient(to right, #f6f6f6, #d6d6d6 35%, #fff 75%);
    border-right: 1px solid #7a9ebd;
}

.canvas {
    position: relative;
    overflow: hidden;
}

.report-table {
    width: 361px;
    margin: 10px 0 0 10px;
    table-layout: fixed;
    border-collapse: collapse;
    background: #fff;
    box-shadow: 1px 1px 3px #999;
}

.report-table td {
    border-left: 1px solid #777;
}

.report-table td:first-child {
    border-left-color: #000;
}

.column-header td {
    height: 34px;
    background: #bfdfff;
    border-top: 1px solid #000;
}

.detail td {
    height: 17px;
}

.mark-header {
    left: 8px;
    top: 7px;
    width: 366px;
    height: 36px;
}

.mark-header b {
    left: 20px;
    top: 3px;
}

.mark-detail {
    left: 7px;
    top: 44px;
    width: 369px;
    height: 21px;
}

.mark-detail b {
    left: 47px;
    top: -4px;
}

.notes {
    position: absolute;
    left: 46px;
    top: 138px;
    color: #fb3434;
}

.notes p {
    display: grid;
    grid-template-columns: 29px auto;
    height: 36px;
    line-height: 36px;
}

.notes b {
    line-height: 36px;
}

.notes span,
.callout {
    font: 300 29px/36px 'Noto Sans CJK SC', sans-serif;
    white-space: nowrap;
}

.notes code {
    font: 24px 'Liberation Mono', monospace;
}

.callout {
    position: absolute;
    color: #fb3434;
}

.callout-main {
    left: 75px;
    top: 612px;
}

.callout-sub {
    left: 271px;
    top: 672px;
}

.arrows {
    position: absolute;
    left: 53px;
    top: 652px;
}

.sheet-tabs {
    grid-column: 1 / 3;
    display: flex;
    gap: 3px;
}

.sheet-tabs button {
    height: 22px;
    gap: 3px;
    padding: 0 4px 0 2px;
    border: 1px solid transparent;
}

.sheet-tabs .selected {
    margin-left: 2px;
    border-color: #90c8f6;
}

/* Palette and properties */
.right {
    display: flex;
    flex-direction: column;
    gap: 4px;
    min-height: 0;
}

.palette {
    flex: 1;
}

.palette h3 {
    display: flex;
    height: 17px;
    gap: 3px;
    padding-left: 5px;
    background: #d4d0c8;
    border-top: 1px solid #efefef;
    font-size: 12px;
}

.items {
    display: grid;
    grid-template-columns: repeat(3, 1fr);
}

.items button {
    justify-content: flex-start;
    gap: 3px;
    height: 23px;
    padding-left: 2px;
    border: 1px solid transparent;
    white-space: nowrap;
}

.items .selected {
    border-color: #90c8f6;
}

.label-icon {
    font: bold 7px/14px 'Liberation Sans', sans-serif;
    color: #555;
}

.properties {
    height: 359px;
}

.no-properties {
    flex: 1;
    display: flex;
    align-items: center;
    justify-content: center;
    background: #fff;
    color: #888;
    font-size: 12px;
    border-bottom: 1px solid #ddd;
}

.description {
    height: 74px;
    margin-top: 3px;
    padding: 5px 6px;
    border-top: 1px solid #a0a0a0;
}

.help {
    width: 15px;
    height: 15px;
    margin-left: auto;
    border-radius: 50%;
    background: #8f8f8f;
    color: #b5b5b5;
    font: bold 11px 'Liberation Sans', sans-serif;
}

.problems {
    grid-column: 3 / 5;
}

.problem-list {
    flex: 1;
    border: 1px solid #808894;
}

.problem-list table {
    width: calc(100% - 2px);
    table-layout: fixed;
    border-collapse: collapse;
    background: #fff;
}

.problem-list th {
    height: 25px;
    padding: 3px 5px 0;
    text-align: left;
    font-weight: normal;
    border-right: 1px solid #e5e5e5;
}

.mark-col {
    width: 20px;
}

.object-col {
    width: 42%;
}

.statusbar {
    height: 22px;
    border-top: 1px solid #a0a0a0;
    box-shadow: inset 0 1px #fff;
}

.watermark {
    position: absolute;
    right: 90px;
    bottom: 49px;
    color: #bababa;
    font: 15px/22px 'Open Sans', 'Noto Sans CJK SC', sans-serif;
}

.watermark .big {
    font-size: 20px;
    line-height: 26px;
}

.taskbar {
    grid-column: 1 / 3;
    display: flex;
    gap: 540px;
    padding-left: 546px;
    position: relative;
    overflow: hidden;
    background: #232226;
}

.taskbar span {
    width: 48px;
    background: #434246;
}

.taskbar time {
    position: absolute;
    right: 74px;
    top: 2px;
    color: #fff;
    font: 12px 'Open Sans', sans-serif;
}
```
